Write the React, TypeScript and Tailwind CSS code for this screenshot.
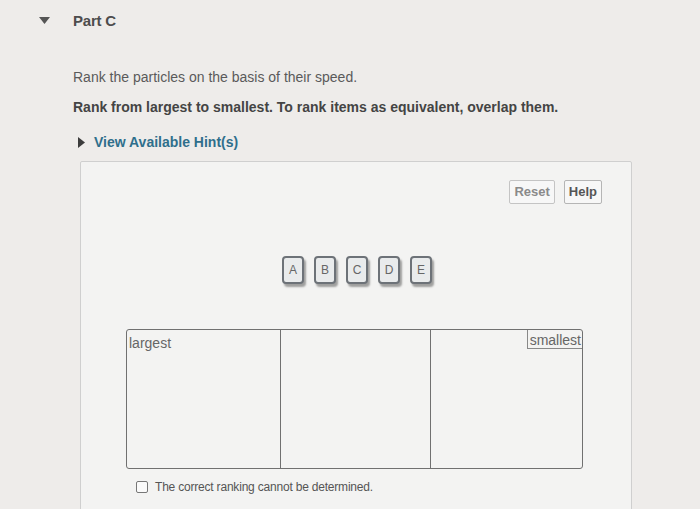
import React from 'react';

const tiles = ['A', 'B', 'C', 'D', 'E'];

export default function App() {
  return (
    <div
      className="w-[700px] h-[509px] overflow-hidden bg-[#eeecea] text-[#4a4a4a]"
      style={{ fontFamily: 'Arial, "Liberation Sans", sans-serif' }}
    >
      <div className="flex items-center pt-[11px] pl-[39px] h-[20px] box-content">
        <svg width="11" height="8" viewBox="0 0 11 8" className="mr-[23px]">
          <path d="M0 0 L11 0 L5.5 7 Z" fill="#555" />
        </svg>
        <span className="text-[15px] font-bold text-[#4d4d4d] tracking-[-0.2px]">Part C</span>
      </div>

      <div className="pl-[73px] pt-[37px]">
        <p className="text-[14px] leading-[18px] text-[#5a5a5a]">Rank the particles on the basis of their speed.</p>
        <p className="mt-[12px] text-[14px] leading-[18px] font-bold text-[#444]">
          Rank from largest to smallest. To rank items as equivalent, overlap them.
        </p>
        <div className="mt-[16px] flex items-center pl-[5px]">
          <svg width="7" height="11" viewBox="0 0 7 11" className="mr-[9px]">
            <path d="M0 0 L7 5.5 L0 11 Z" fill="#3c3c3c" />
          </svg>
          <span className="text-[14px] font-bold text-[#2f6f8c]">View Available Hint(s)</span>
        </div>
      </div>

      <div className="ml-[80px] mt-[8px] w-[552px] h-[360px] border border-[#cfcfcf] bg-[#f3f3f2] rounded-[2px]">
        <div className="flex justify-end gap-[9px] pt-[18px] pr-[29px]">
          <button className="h-[24px] px-[4px] border border-[#c4c4c4] rounded-[2px] bg-[#f7f7f7] text-[13px] font-bold text-[#8a8a8a]">
            Reset
          </button>
          <button className="h-[24px] px-[4px] border border-[#b5b5b5] rounded-[2px] bg-[#f7f7f7] text-[13px] font-bold text-[#555]">
            Help
          </button>
        </div>

        <div className="flex justify-center gap-[10px] mt-[52px] pl-[2px]">
          {tiles.map(t => (
            <div
              key={t}
              className="w-[22px] h-[28px] flex items-center justify-center rounded-[4px] border-2 border-[#6d7278] bg-[#e9ebec] text-[12px] text-[#666] shadow-[2px_3px_2px_rgba(0,0,0,0.35)]"
            >
              {t}
            </div>
          ))}
        </div>

        <div className="ml-[45px] mt-[45px] w-[457px] h-[140px] border border-[#707070] rounded-[3px] grid grid-cols-[154px_150px_1fr]">
          <div className="border-r border-[#707070] px-[2px] pt-[1px]">
            <span className="text-[14px] text-[#666]">largest</span>
          </div>
          <div className="border-r border-[#707070]" />
          <div className="flex justify-end">
            <span className="h-[19px] text-[14px] text-[#666] pl-[2px] pr-[1px] border-l border-b border-[#888]">smallest</span>
          </div>
        </div>

        <label className="flex items-center ml-[55px] mt-[9px]">
          <span className="w-[12px] h-[12px] border border-[#777] rounded-[2px] bg-[#fafafa] mr-[7px]" />
          <span className="text-[12px] text-[#555] tracking-[-0.2px]">The correct ranking cannot be determined.</span>
        </label>
      </div>
    </div>
  );
}
